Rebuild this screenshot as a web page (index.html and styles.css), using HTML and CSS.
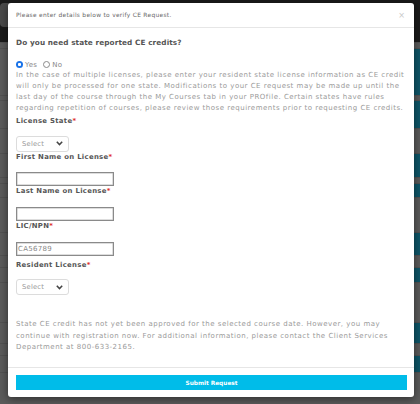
FILE: index.html
```html
<!DOCTYPE html>
<html>
<head>
<meta charset="utf-8">
<link rel="stylesheet" href="styles.css">
</head>
<body>
<div class="page">
  <div class="topbar"><div class="topchip"></div></div>
  <div class="rows">
    <div class="row h6"></div>
    <div class="row h47 teal"></div>
    <div class="row h5"></div>
    <div class="row h28 teal"></div>
    <div class="row h25"></div>
    <div class="row h24 teal"></div>
    <div class="row h6"></div>
    <div class="row h14 teal"></div>
    <div class="row h35"></div>
    <div class="row h23 teal"></div>
    <div class="row h12"></div>
    <div class="row h15 teal"></div>
    <div class="row h40"></div>
    <div class="row h21 teal"></div>
    <div class="row h12"></div>
    <div class="row h17 teal"></div>
    <div class="row h32"></div>
  </div>
</div>

<div class="modal">
  <div class="modal-header">
    <span class="header-text">Please enter details below to verify CE Request.</span>
    <span class="close">×</span>
  </div>
  <div class="modal-body">
    <div class="title">Do you need state reported CE credits?</div>
    <div class="radios">
      <label class="radio"><span class="dot checked"></span>Yes</label>
      <label class="radio"><span class="dot"></span>No</label>
    </div>
    <p class="info">In the case of multiple licenses, please enter your resident state license information as CE credit will only be processed for one state. Modifications to your CE request may be made up until the last day of the course through the My Courses tab in your PROfile. Certain states have rules regarding repetition of courses, please review those requirements prior to requesting CE credits.</p>

    <div class="label first">License State<span class="req">*</span></div>
    <div class="select"><span>Select</span><svg width="7" height="5" viewBox="0 0 7 5"><path d="M0.8 0.8 L3.5 3.6 L6.2 0.8" fill="none" stroke="#444" stroke-width="1.5"/></svg></div>

    <div class="label">First Name on License<span class="req">*</span></div>
    <div class="input"></div>

    <div class="label">Last Name on License<span class="req">*</span></div>
    <div class="input"></div>

    <div class="label">LIC/NPN<span class="req">*</span></div>
    <div class="input lic">CA56789</div>

    <div class="label res">Resident License<span class="req">*</span></div>
    <div class="select"><span>Select</span><svg width="7" height="5" viewBox="0 0 7 5"><path d="M0.8 0.8 L3.5 3.6 L6.2 0.8" fill="none" stroke="#444" stroke-width="1.5"/></svg></div>

    <p class="notice">State CE credit has not yet been approved for the selected course date. However, you may continue with registration now. For additional information, please contact the Client Services Department at 800-633-2165.</p>
  </div>
  <div class="modal-footer">
    <div class="btn">Submit Request</div>
  </div>
</div>
</body>
</html>
```

FILE: styles.css
```css
html, body {
  margin: 0;
  padding: 0;
}
body {
  width: 420px;
  height: 404px;
  overflow: hidden;
  background: #5a5a5a;
  font-family: "DejaVu Sans", sans-serif;
  position: relative;
}
.page {
  display: flex;
  flex-direction: column;
}
.topbar {
  height: 42px;
  background: #1b1b1b;
  padding-top: 3px;
  box-sizing: border-box;
}
.topchip {
  width: 14px;
  height: 24px;
  border-radius: 4px;
  background: #4a4a4a;
}
.rows {
  display: flex;
  flex-direction: column;
}
.row {
  background: #5b5b5b;
  border-top: 1px solid #525252;
  box-sizing: border-box;
}
.row.teal {
  background: linear-gradient(to right, #5b5b5b 0, #5b5b5b 414px, #0e5668 414px);
}
.h5 { height: 5px; }
.h6 { height: 6px; }
.h12 { height: 12px; }
.h14 { height: 14px; }
.h15 { height: 15px; }
.h17 { height: 17px; }
.h21 { height: 21px; }
.h23 { height: 23px; }
.h24 { height: 24px; }
.h25 { height: 25px; }
.h28 { height: 28px; }
.h32 { height: 32px; }
.h35 { height: 35px; }
.h40 { height: 40px; }
.h47 { height: 47px; }

.modal {
  position: absolute;
  left: 8px;
  top: 3px;
  width: 406px;
  height: 394px;
  background: #fff;
  border-radius: 3px;
  box-shadow: 0 2px 8px rgba(0,0,0,0.5);
  display: flex;
  flex-direction: column;
  overflow: hidden;
}
.modal-header {
  height: 25px;
  border-bottom: 1px solid #e6e6e6;
  box-sizing: border-box;
  padding: 0 8px;
  display: flex;
  align-items: center;
  justify-content: space-between;
}
.header-text {
  font-size: 5.9px;
  letter-spacing: 0.3px;
  color: #666;
}
.close {
  font-size: 8px;
  color: #c8c8c8;
  margin-right: 1px;
}
.modal-body {
  flex: 1;
  padding: 10px 8px 0;
  color: #555;
}
.title {
  font-size: 7.3px;
  letter-spacing: 0.1px;
  font-weight: bold;
  color: #555;
  line-height: 10px;
  margin-bottom: 11px;
}
.radios {
  display: flex;
  gap: 6px;
  height: 11px;
  align-items: center;
  font-size: 7px;
  letter-spacing: 0.3px;
  color: #888;
}
.radio {
  display: flex;
  align-items: center;
  gap: 2px;
}
.dot {
  width: 7px;
  height: 7px;
  border: 1px solid #8a8a8a;
  border-radius: 50%;
  box-sizing: border-box;
}
.dot.checked {
  border: none;
  background: radial-gradient(circle, #fff 0 1.3px, #1a73e8 1.8px);
}
.info {
  margin: 0;
  font-size: 7px;
  letter-spacing: 0.5px;
  line-height: 11px;
  color: #9a9a9a;
}
.label {
  font-size: 6.9px;
  letter-spacing: 0.3px;
  font-weight: bold;
  color: #555;
  line-height: 11px;
}
.label.first {
  margin-top: 2px;
}
.label.res {
  margin-top: 4px;
}
.req {
  color: #e0302c;
}
.select {
  margin-top: 8.5px;
  width: 53px;
  height: 16px;
  border: 1px solid #dcdcdc;
  border-radius: 3px;
  box-sizing: border-box;
  display: flex;
  align-items: center;
  justify-content: space-between;
  padding: 0 5px 0 5px;
  font-size: 6.8px;
  letter-spacing: 0.2px;
  color: #999;
}
.input {
  margin-top: 9.5px;
  width: 98px;
  height: 14px;
  border: 1px solid #8a8a8a;
  box-shadow: inset 0 0 0 0.5px #bbb;
  box-sizing: border-box;
  font-size: 7px;
  letter-spacing: 0.3px;
  color: #888;
  display: flex;
  align-items: center;
  padding-left: 1px;
}
.input.lic {
  margin-top: 10px;
}
.notice {
  margin: 24px 0 0;
  font-size: 7px;
  letter-spacing: 0.5px;
  line-height: 11.5px;
  color: #9a9a9a;
}
.modal-footer {
  border-top: 1px solid #e6e6e6;
  padding: 7px 7px 7px 8px;
}
.btn {
  height: 15px;
  background: #00bce9;
  color: #fff;
  font-size: 5.8px;
  font-weight: bold;
  display: flex;
  align-items: center;
  justify-content: center;
}
```
